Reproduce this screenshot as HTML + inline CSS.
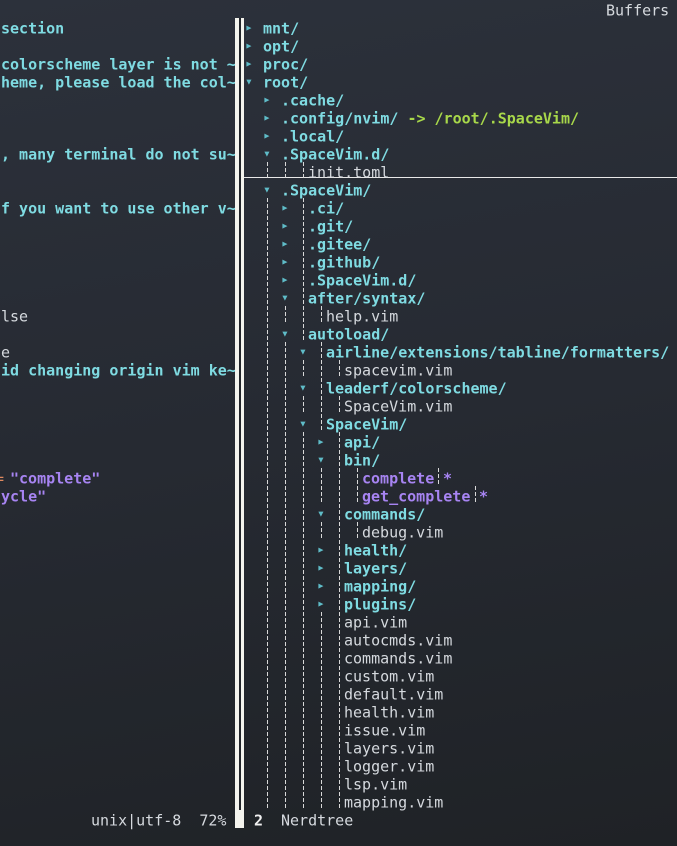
<!DOCTYPE html>
<html><head><meta charset="utf-8"><style>
html,body{margin:0;padding:0}
body{width:677px;height:846px;overflow:hidden;position:relative;background:linear-gradient(170deg,#2c313b 0%,#262a32 50%,#1f2226 100%);font-family:"DejaVu Sans Mono","Liberation Mono",monospace;font-size:15px;color:#d5d9de}
.t{position:absolute;white-space:pre;line-height:18px;height:18px;transform:translateY(1.5px)}
.c{color:#7fdbe2;font-weight:bold}
.f{color:#d5d9de}
.a{color:#5fbcc8;font-size:13px}
.p{color:#a784f2;font-weight:bold}
.g{color:#a8d84a;font-weight:bold}
.gd{position:absolute;width:1px;background:repeating-linear-gradient(to bottom,#d8d8d8 0,#d8d8d8 4px,transparent 4px,transparent 6px)}
</style></head><body>
<div class="t f" style="top:0;left:606px">Buffers</div>
<div class="t c" style="top:18px;left:1px">section</div>
<div class="t c" style="top:54px;left:1px">colorscheme layer is not ~</div>
<div class="t c" style="top:72px;left:1px">heme, please load the col~</div>
<div class="t c" style="top:144px;left:1px">, many terminal do not su~</div>
<div class="t c" style="top:198px;left:1px">f you want to use other v~</div>
<div class="t f" style="top:306px;left:1px">lse</div>
<div class="t f" style="top:342px;left:1px">e</div>
<div class="t c" style="top:360px;left:1px">id changing origin vim ke~</div>
<div class="t" style="top:468px;left:-5px;color:#e08a60">=</div>
<div class="t p" style="top:468px;left:10px">"complete"</div>
<div class="t p" style="top:486px;left:1px">ycle"</div>
<div style="position:absolute;left:235px;top:18px;width:9px;height:810px;background:#f4f4ee"></div>
<div style="position:absolute;left:239px;top:18px;width:1.5px;height:792px;background:#22252a"></div>
<div style="position:absolute;left:244px;top:177px;width:433px;height:1px;background:#e8e8e8"></div>
<div class="gd" style="left:267px;top:162px;height:18px"></div>
<div class="gd" style="left:267px;top:198px;height:612px"></div>
<div class="gd" style="left:285px;top:162px;height:18px"></div>
<div class="gd" style="left:285px;top:306px;height:18px"></div>
<div class="gd" style="left:285px;top:342px;height:468px"></div>
<div class="gd" style="left:303px;top:162px;height:18px"></div>
<div class="gd" style="left:303px;top:198px;height:144px"></div>
<div class="gd" style="left:303px;top:360px;height:18px"></div>
<div class="gd" style="left:303px;top:396px;height:18px"></div>
<div class="gd" style="left:303px;top:432px;height:378px"></div>
<div class="gd" style="left:321px;top:306px;height:18px"></div>
<div class="gd" style="left:321px;top:342px;height:90px"></div>
<div class="gd" style="left:321px;top:468px;height:36px"></div>
<div class="gd" style="left:321px;top:522px;height:18px"></div>
<div class="gd" style="left:321px;top:612px;height:198px"></div>
<div class="gd" style="left:339px;top:360px;height:18px"></div>
<div class="gd" style="left:339px;top:396px;height:18px"></div>
<div class="gd" style="left:339px;top:432px;height:378px"></div>
<div class="gd" style="left:357px;top:468px;height:36px"></div>
<div class="gd" style="left:357px;top:522px;height:18px"></div>
<div class="gd" style="left:438px;top:468px;height:18px"></div>
<div class="gd" style="left:475px;top:486px;height:18px"></div>
<div class="t a" style="top:18px;left:245px">▸</div><div class="t c" style="top:18px;left:263px">mnt/</div>
<div class="t a" style="top:36px;left:245px">▸</div><div class="t c" style="top:36px;left:263px">opt/</div>
<div class="t a" style="top:54px;left:245px">▸</div><div class="t c" style="top:54px;left:263px">proc/</div>
<div class="t a" style="top:72px;left:245px">▾</div><div class="t c" style="top:72px;left:263px">root/</div>
<div class="t a" style="top:90px;left:263px">▸</div><div class="t c" style="top:90px;left:281px">.cache/</div>
<div class="t a" style="top:108px;left:263px">▸</div><div class="t c" style="top:108px;left:281px">.config/nvim/ <span class="g">-&gt; /root/.SpaceVim/</span></div>
<div class="t a" style="top:126px;left:263px">▸</div><div class="t c" style="top:126px;left:281px">.local/</div>
<div class="t a" style="top:144px;left:263px">▾</div><div class="t c" style="top:144px;left:281px">.SpaceVim.d/</div>
<div class="t f" style="top:162px;left:308px">init.toml</div>
<div class="t a" style="top:180px;left:263px">▾</div><div class="t c" style="top:180px;left:281px">.SpaceVim/</div>
<div class="t a" style="top:198px;left:281px">▸</div><div class="t c" style="top:198px;left:308px">.ci/</div>
<div class="t a" style="top:216px;left:281px">▸</div><div class="t c" style="top:216px;left:308px">.git/</div>
<div class="t a" style="top:234px;left:281px">▸</div><div class="t c" style="top:234px;left:308px">.gitee/</div>
<div class="t a" style="top:252px;left:281px">▸</div><div class="t c" style="top:252px;left:308px">.github/</div>
<div class="t a" style="top:270px;left:281px">▸</div><div class="t c" style="top:270px;left:308px">.SpaceVim.d/</div>
<div class="t a" style="top:288px;left:281px">▾</div><div class="t c" style="top:288px;left:308px">after/syntax/</div>
<div class="t f" style="top:306px;left:326px">help.vim</div>
<div class="t a" style="top:324px;left:281px">▾</div><div class="t c" style="top:324px;left:308px">autoload/</div>
<div class="t a" style="top:342px;left:299px">▾</div><div class="t c" style="top:342px;left:326px">airline/extensions/tabline/formatters/</div>
<div class="t f" style="top:360px;left:344px">spacevim.vim</div>
<div class="t a" style="top:378px;left:299px">▾</div><div class="t c" style="top:378px;left:326px">leaderf/colorscheme/</div>
<div class="t f" style="top:396px;left:344px">SpaceVim.vim</div>
<div class="t a" style="top:414px;left:299px">▾</div><div class="t c" style="top:414px;left:326px">SpaceVim/</div>
<div class="t a" style="top:432px;left:317px">▸</div><div class="t c" style="top:432px;left:344px">api/</div>
<div class="t a" style="top:450px;left:317px">▾</div><div class="t c" style="top:450px;left:344px">bin/</div>
<div class="t p" style="top:468px;left:362px">complete</div><div class="t p" style="top:468px;left:443px">*</div>
<div class="t p" style="top:486px;left:362px">get_complete</div><div class="t p" style="top:486px;left:479px">*</div>
<div class="t a" style="top:504px;left:317px">▾</div><div class="t c" style="top:504px;left:344px">commands/</div>
<div class="t f" style="top:522px;left:362px">debug.vim</div>
<div class="t a" style="top:540px;left:317px">▸</div><div class="t c" style="top:540px;left:344px">health/</div>
<div class="t a" style="top:558px;left:317px">▸</div><div class="t c" style="top:558px;left:344px">layers/</div>
<div class="t a" style="top:576px;left:317px">▸</div><div class="t c" style="top:576px;left:344px">mapping/</div>
<div class="t a" style="top:594px;left:317px">▸</div><div class="t c" style="top:594px;left:344px">plugins/</div>
<div class="t f" style="top:612px;left:344px">api.vim</div>
<div class="t f" style="top:630px;left:344px">autocmds.vim</div>
<div class="t f" style="top:648px;left:344px">commands.vim</div>
<div class="t f" style="top:666px;left:344px">custom.vim</div>
<div class="t f" style="top:684px;left:344px">default.vim</div>
<div class="t f" style="top:702px;left:344px">health.vim</div>
<div class="t f" style="top:720px;left:344px">issue.vim</div>
<div class="t f" style="top:738px;left:344px">layers.vim</div>
<div class="t f" style="top:756px;left:344px">logger.vim</div>
<div class="t f" style="top:774px;left:344px">lsp.vim</div>
<div class="t f" style="top:792px;left:344px">mapping.vim</div>
<div class="t f" style="top:810px;left:91px">unix|utf-8  72%</div>
<div class="t f" style="top:810px;left:254px;font-weight:bold;color:#f0f0f0">2</div>
<div class="t f" style="top:810px;left:281px">Nerdtree</div>
</body></html>
